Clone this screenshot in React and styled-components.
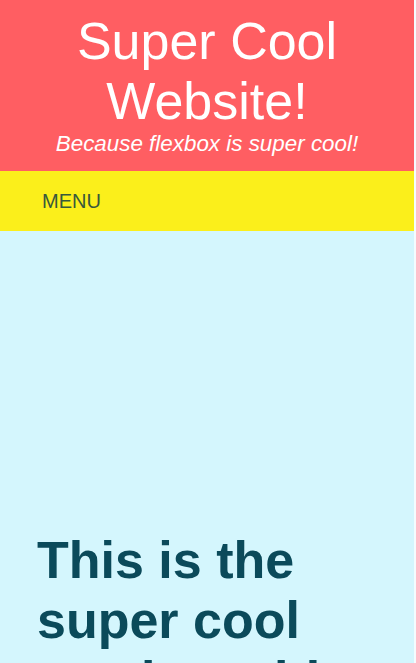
import styled, { createGlobalStyle } from 'styled-components';

const GlobalStyle = createGlobalStyle`
  body {
    margin: 0;
    font-family: "Liberation Sans", Arial, sans-serif;
    background: #f4fcfe;
  }
`;

const Page = styled.div`
  width: 414px;
`;

const Header = styled.header`
  background: #ff5e62;
  color: #ffffff;
  text-align: center;
  padding: 11px 20px 14px;
`;

const Title = styled.h1`
  margin: 0;
  font-size: 52px;
  font-weight: 400;
`;

const Tagline = styled.p`
  margin: 0;
  font-size: 22.4px;
  font-style: italic;
`;

const Nav = styled.nav`
  display: flex;
  align-items: center;
  height: 60px;
  padding: 0 42px;
  background: #fbef1b;
`;

const MenuLink = styled.a`
  font-size: 20px;
  color: #38583c;
  text-decoration: none;
  cursor: pointer;
`;

const Main = styled.main`
  background: #d4f6fd;
  padding: 299px 37px 40px;
`;

const SectionTitle = styled.h2`
  margin: 0;
  font-size: 52px;
  font-weight: 700;
  color: #0b4a5a;
`;

export default function App() {
  return (
    <Page>
      <GlobalStyle />
      <Header>
        <Title>Super Cool Website!</Title>
        <Tagline>Because flexbox is super cool!</Tagline>
      </Header>
      <Nav>
        <MenuLink>MENU</MenuLink>
      </Nav>
      <Main>
        <SectionTitle>This is the super cool section with flexbox</SectionTitle>
      </Main>
    </Page>
  );
}
